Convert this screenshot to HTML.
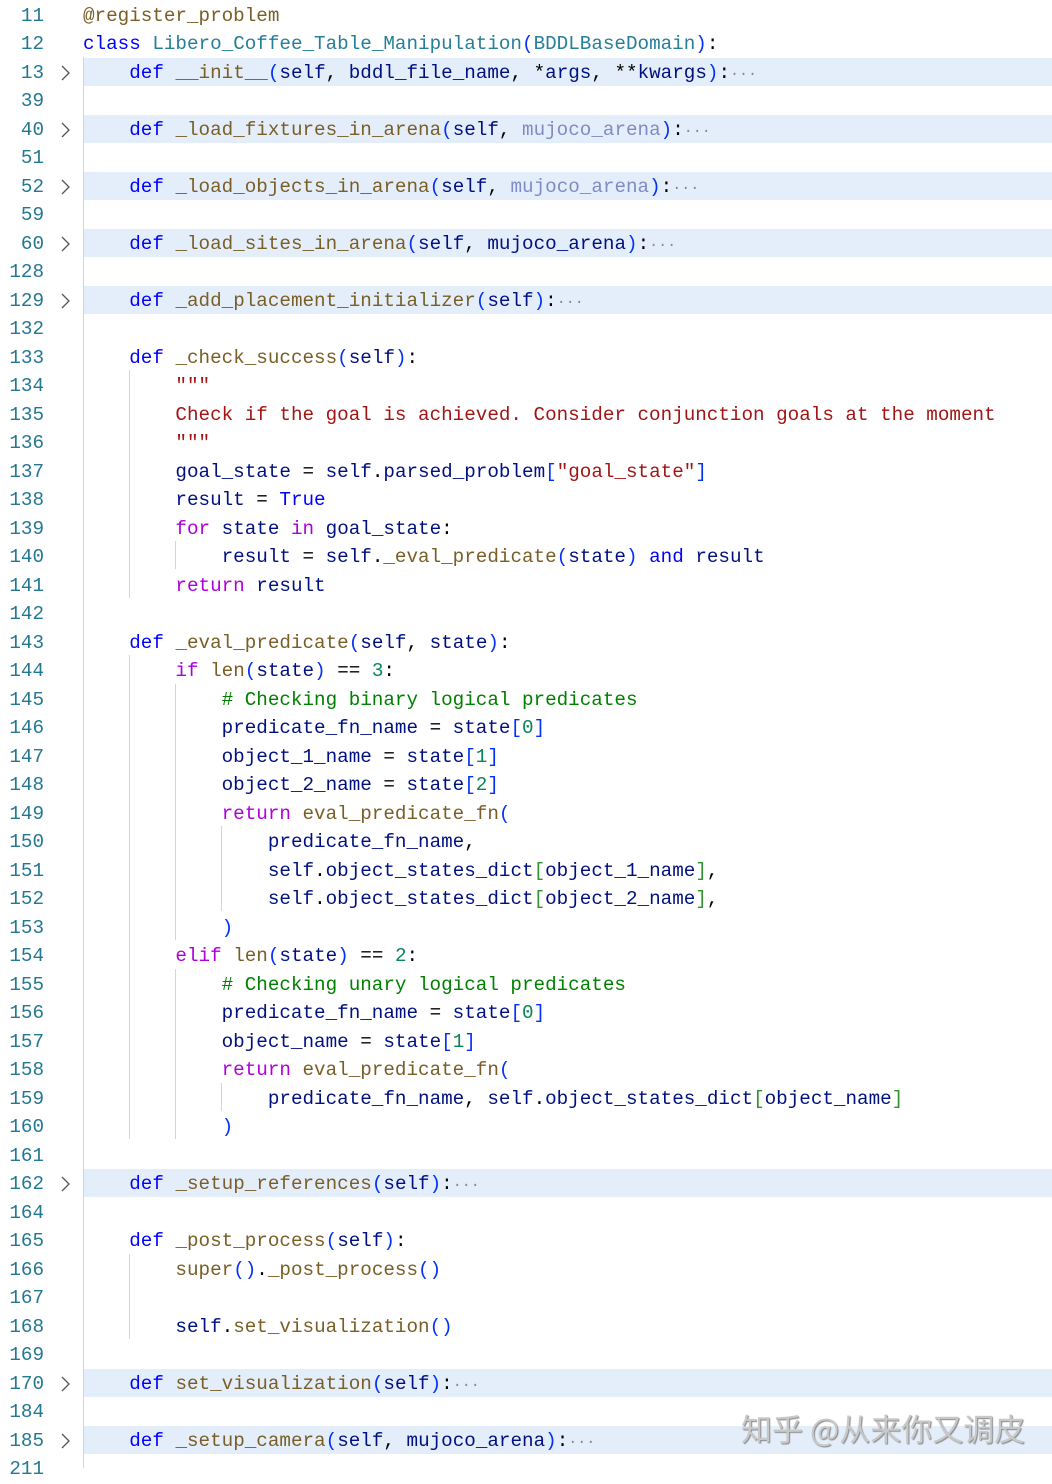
<!DOCTYPE html>
<html><head><meta charset="utf-8"><style>
html,body{margin:0;padding:0;background:#fff;}
body{width:1052px;height:1468px;position:relative;overflow:hidden;font-family:"Liberation Mono",monospace;font-size:19.25px;}
.r{position:absolute;left:0;width:1052px;height:28.5px;line-height:28.5px;white-space:pre;margin-top:1.5px;}
.hl{position:absolute;left:84px;right:0;height:28px;background:#e4eefb;}
.ln{position:absolute;left:0;width:44px;text-align:right;color:#237893;}
.ch{position:absolute;left:61px;top:6px;width:10px;height:17px;}
.cd{position:absolute;left:83px;color:#000;}
.g{position:absolute;width:1px;background:#d4d4d4;}
.k{color:#0000ff}.f{color:#795e26}.v{color:#001080}.p{color:#7f8bc3}.s{color:#a31515}.c{color:#af00db}.n{color:#098658}.m{color:#008000}.t{color:#267f99}.b1{color:#0431fa}.b2{color:#319331}.d{color:#888;font-size:15px}.a{color:#795e26}
.wm{position:absolute;left:741px;top:1405px;font-family:"Noto Sans CJK SC",sans-serif;font-size:31px;color:#c8c8c8;text-shadow:1px 1px 1px #888;}
</style></head><body>
<div class="g" style="left:83px;top:57px;height:1411px"></div>
<div class="g" style="left:129px;top:370px;height:228px"></div>
<div class="g" style="left:129px;top:655px;height:484px"></div>
<div class="g" style="left:129px;top:1254px;height:85px"></div>
<div class="g" style="left:175px;top:541px;height:28px"></div>
<div class="g" style="left:175px;top:684px;height:256px"></div>
<div class="g" style="left:175px;top:969px;height:170px"></div>
<div class="g" style="left:221px;top:826px;height:85px"></div>
<div class="g" style="left:221px;top:1083px;height:28px"></div>

<div class="r" style="top:0px"><span class="ln">11</span><span class="cd"><span class="a">@register_problem</span></span></div>
<div class="r" style="top:28.5px"><span class="ln">12</span><span class="cd"><span class="k">class</span> <span class="t">Libero_Coffee_Table_Manipulation</span><span class="b1">(</span><span class="t">BDDLBaseDomain</span><span class="b1">)</span>:</span></div>
<div class="hl" style="top:57.5px"></div>
<div class="r" style="top:57px"><span class="ln">13</span><svg class="ch" viewBox="0 0 10 17"><path d="M1,1 L8,8 L1,15" fill="none" stroke="#555" stroke-width="1.3"/></svg><span class="cd">    <span class="k">def</span> <span class="f">__init__</span><span class="b1">(</span><span class="v">self</span>, <span class="v">bddl_file_name</span>, *<span class="v">args</span>, **<span class="v">kwargs</span><span class="b1">)</span>:<span class="d">···</span></span></div>
<div class="r" style="top:85.5px"><span class="ln">39</span></div>
<div class="hl" style="top:114.5px"></div>
<div class="r" style="top:114px"><span class="ln">40</span><svg class="ch" viewBox="0 0 10 17"><path d="M1,1 L8,8 L1,15" fill="none" stroke="#555" stroke-width="1.3"/></svg><span class="cd">    <span class="k">def</span> <span class="f">_load_fixtures_in_arena</span><span class="b1">(</span><span class="v">self</span>, <span class="p">mujoco_arena</span><span class="b1">)</span>:<span class="d">···</span></span></div>
<div class="r" style="top:142.5px"><span class="ln">51</span></div>
<div class="hl" style="top:171.5px"></div>
<div class="r" style="top:171px"><span class="ln">52</span><svg class="ch" viewBox="0 0 10 17"><path d="M1,1 L8,8 L1,15" fill="none" stroke="#555" stroke-width="1.3"/></svg><span class="cd">    <span class="k">def</span> <span class="f">_load_objects_in_arena</span><span class="b1">(</span><span class="v">self</span>, <span class="p">mujoco_arena</span><span class="b1">)</span>:<span class="d">···</span></span></div>
<div class="r" style="top:199.5px"><span class="ln">59</span></div>
<div class="hl" style="top:228.5px"></div>
<div class="r" style="top:228px"><span class="ln">60</span><svg class="ch" viewBox="0 0 10 17"><path d="M1,1 L8,8 L1,15" fill="none" stroke="#555" stroke-width="1.3"/></svg><span class="cd">    <span class="k">def</span> <span class="f">_load_sites_in_arena</span><span class="b1">(</span><span class="v">self</span>, <span class="v">mujoco_arena</span><span class="b1">)</span>:<span class="d">···</span></span></div>
<div class="r" style="top:256.5px"><span class="ln">128</span></div>
<div class="hl" style="top:285.5px"></div>
<div class="r" style="top:285px"><span class="ln">129</span><svg class="ch" viewBox="0 0 10 17"><path d="M1,1 L8,8 L1,15" fill="none" stroke="#555" stroke-width="1.3"/></svg><span class="cd">    <span class="k">def</span> <span class="f">_add_placement_initializer</span><span class="b1">(</span><span class="v">self</span><span class="b1">)</span>:<span class="d">···</span></span></div>
<div class="r" style="top:313.5px"><span class="ln">132</span></div>
<div class="r" style="top:342px"><span class="ln">133</span><span class="cd">    <span class="k">def</span> <span class="f">_check_success</span><span class="b1">(</span><span class="v">self</span><span class="b1">)</span>:</span></div>
<div class="r" style="top:370.5px"><span class="ln">134</span><span class="cd">        <span class="s">"""</span></span></div>
<div class="r" style="top:399px"><span class="ln">135</span><span class="cd">        <span class="s">Check if the goal is achieved. Consider conjunction goals at the moment</span></span></div>
<div class="r" style="top:427.5px"><span class="ln">136</span><span class="cd">        <span class="s">"""</span></span></div>
<div class="r" style="top:456px"><span class="ln">137</span><span class="cd">        <span class="v">goal_state</span> = <span class="v">self</span>.<span class="v">parsed_problem</span><span class="b1">[</span><span class="s">"goal_state"</span><span class="b1">]</span></span></div>
<div class="r" style="top:484.5px"><span class="ln">138</span><span class="cd">        <span class="v">result</span> = <span class="k">True</span></span></div>
<div class="r" style="top:513px"><span class="ln">139</span><span class="cd">        <span class="c">for</span> <span class="v">state</span> <span class="c">in</span> <span class="v">goal_state</span>:</span></div>
<div class="r" style="top:541.5px"><span class="ln">140</span><span class="cd">            <span class="v">result</span> = <span class="v">self</span>.<span class="f">_eval_predicate</span><span class="b1">(</span><span class="v">state</span><span class="b1">)</span> <span class="k">and</span> <span class="v">result</span></span></div>
<div class="r" style="top:570px"><span class="ln">141</span><span class="cd">        <span class="c">return</span> <span class="v">result</span></span></div>
<div class="r" style="top:598.5px"><span class="ln">142</span></div>
<div class="r" style="top:627px"><span class="ln">143</span><span class="cd">    <span class="k">def</span> <span class="f">_eval_predicate</span><span class="b1">(</span><span class="v">self</span>, <span class="v">state</span><span class="b1">)</span>:</span></div>
<div class="r" style="top:655.5px"><span class="ln">144</span><span class="cd">        <span class="c">if</span> <span class="f">len</span><span class="b1">(</span><span class="v">state</span><span class="b1">)</span> == <span class="n">3</span>:</span></div>
<div class="r" style="top:684px"><span class="ln">145</span><span class="cd">            <span class="m"># Checking binary logical predicates</span></span></div>
<div class="r" style="top:712.5px"><span class="ln">146</span><span class="cd">            <span class="v">predicate_fn_name</span> = <span class="v">state</span><span class="b1">[</span><span class="n">0</span><span class="b1">]</span></span></div>
<div class="r" style="top:741px"><span class="ln">147</span><span class="cd">            <span class="v">object_1_name</span> = <span class="v">state</span><span class="b1">[</span><span class="n">1</span><span class="b1">]</span></span></div>
<div class="r" style="top:769.5px"><span class="ln">148</span><span class="cd">            <span class="v">object_2_name</span> = <span class="v">state</span><span class="b1">[</span><span class="n">2</span><span class="b1">]</span></span></div>
<div class="r" style="top:798px"><span class="ln">149</span><span class="cd">            <span class="c">return</span> <span class="f">eval_predicate_fn</span><span class="b1">(</span></span></div>
<div class="r" style="top:826.5px"><span class="ln">150</span><span class="cd">                <span class="v">predicate_fn_name</span>,</span></div>
<div class="r" style="top:855px"><span class="ln">151</span><span class="cd">                <span class="v">self</span>.<span class="v">object_states_dict</span><span class="b2">[</span><span class="v">object_1_name</span><span class="b2">]</span>,</span></div>
<div class="r" style="top:883.5px"><span class="ln">152</span><span class="cd">                <span class="v">self</span>.<span class="v">object_states_dict</span><span class="b2">[</span><span class="v">object_2_name</span><span class="b2">]</span>,</span></div>
<div class="r" style="top:912px"><span class="ln">153</span><span class="cd">            <span class="b1">)</span></span></div>
<div class="r" style="top:940.5px"><span class="ln">154</span><span class="cd">        <span class="c">elif</span> <span class="f">len</span><span class="b1">(</span><span class="v">state</span><span class="b1">)</span> == <span class="n">2</span>:</span></div>
<div class="r" style="top:969px"><span class="ln">155</span><span class="cd">            <span class="m"># Checking unary logical predicates</span></span></div>
<div class="r" style="top:997.5px"><span class="ln">156</span><span class="cd">            <span class="v">predicate_fn_name</span> = <span class="v">state</span><span class="b1">[</span><span class="n">0</span><span class="b1">]</span></span></div>
<div class="r" style="top:1026px"><span class="ln">157</span><span class="cd">            <span class="v">object_name</span> = <span class="v">state</span><span class="b1">[</span><span class="n">1</span><span class="b1">]</span></span></div>
<div class="r" style="top:1054.5px"><span class="ln">158</span><span class="cd">            <span class="c">return</span> <span class="f">eval_predicate_fn</span><span class="b1">(</span></span></div>
<div class="r" style="top:1083px"><span class="ln">159</span><span class="cd">                <span class="v">predicate_fn_name</span>, <span class="v">self</span>.<span class="v">object_states_dict</span><span class="b2">[</span><span class="v">object_name</span><span class="b2">]</span></span></div>
<div class="r" style="top:1111.5px"><span class="ln">160</span><span class="cd">            <span class="b1">)</span></span></div>
<div class="r" style="top:1140px"><span class="ln">161</span></div>
<div class="hl" style="top:1169px"></div>
<div class="r" style="top:1168.5px"><span class="ln">162</span><svg class="ch" viewBox="0 0 10 17"><path d="M1,1 L8,8 L1,15" fill="none" stroke="#555" stroke-width="1.3"/></svg><span class="cd">    <span class="k">def</span> <span class="f">_setup_references</span><span class="b1">(</span><span class="v">self</span><span class="b1">)</span>:<span class="d">···</span></span></div>
<div class="r" style="top:1197px"><span class="ln">164</span></div>
<div class="r" style="top:1225.5px"><span class="ln">165</span><span class="cd">    <span class="k">def</span> <span class="f">_post_process</span><span class="b1">(</span><span class="v">self</span><span class="b1">)</span>:</span></div>
<div class="r" style="top:1254px"><span class="ln">166</span><span class="cd">        <span class="f">super</span><span class="b1">()</span>.<span class="f">_post_process</span><span class="b1">()</span></span></div>
<div class="r" style="top:1282.5px"><span class="ln">167</span></div>
<div class="r" style="top:1311px"><span class="ln">168</span><span class="cd">        <span class="v">self</span>.<span class="f">set_visualization</span><span class="b1">()</span></span></div>
<div class="r" style="top:1339.5px"><span class="ln">169</span></div>
<div class="hl" style="top:1368.5px"></div>
<div class="r" style="top:1368px"><span class="ln">170</span><svg class="ch" viewBox="0 0 10 17"><path d="M1,1 L8,8 L1,15" fill="none" stroke="#555" stroke-width="1.3"/></svg><span class="cd">    <span class="k">def</span> <span class="f">set_visualization</span><span class="b1">(</span><span class="v">self</span><span class="b1">)</span>:<span class="d">···</span></span></div>
<div class="r" style="top:1396.5px"><span class="ln">184</span></div>
<div class="hl" style="top:1425.5px"></div>
<div class="r" style="top:1425px"><span class="ln">185</span><svg class="ch" viewBox="0 0 10 17"><path d="M1,1 L8,8 L1,15" fill="none" stroke="#555" stroke-width="1.3"/></svg><span class="cd">    <span class="k">def</span> <span class="f">_setup_camera</span><span class="b1">(</span><span class="v">self</span>, <span class="v">mujoco_arena</span><span class="b1">)</span>:<span class="d">···</span></span></div>
<div class="r" style="top:1453.5px"><span class="ln">211</span></div>
<div class="wm">知乎 @从来你又调皮</div>
</body></html>
